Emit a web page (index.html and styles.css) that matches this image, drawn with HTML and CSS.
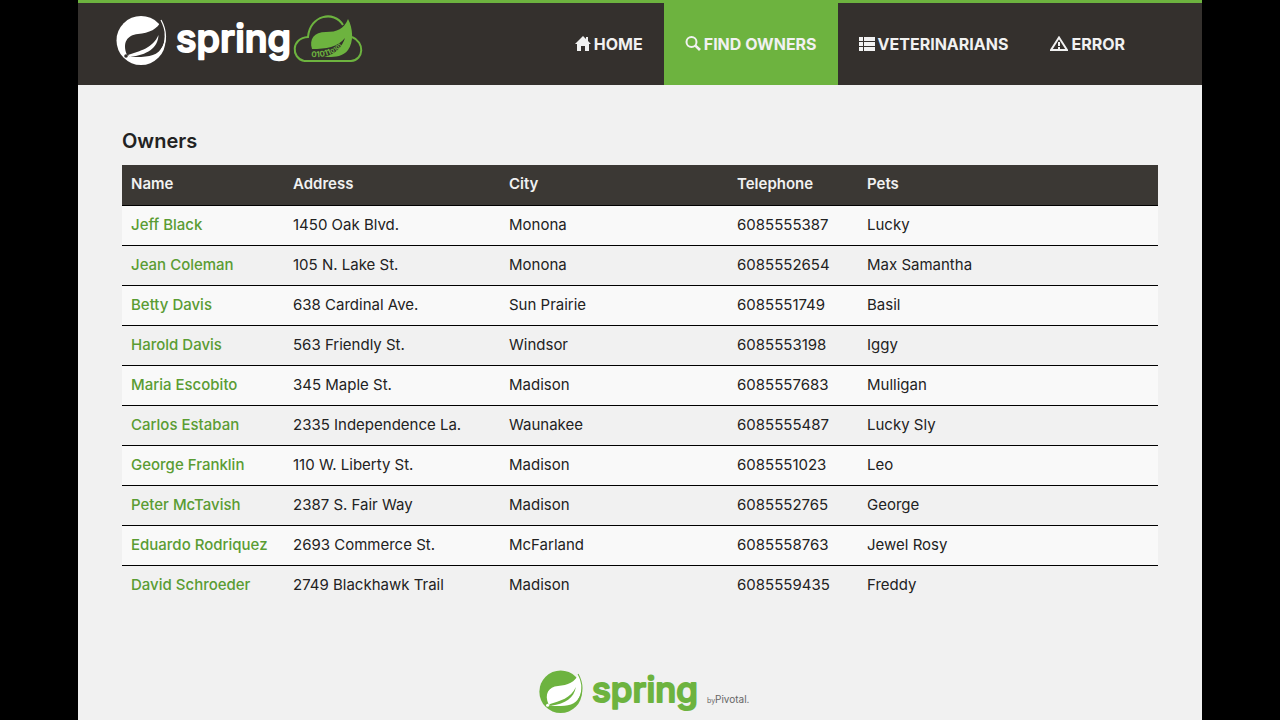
FILE: index.html
```
<!DOCTYPE html>
<html lang="en">
<head>
    <meta charset="UTF-8">
    <meta name="viewport" content="width=device-width, initial-scale=1.0">
    <title>PetClinic :: Owners</title>

    <link rel="stylesheet" href="styles.css">
</head>
<body>
    <div class="page">
        <header class="header">
            <a href="#" class="logo" aria-label="Spring">
                <svg width="248" height="56" viewBox="116 14 248 56">
                    <circle cx="141" cy="40.5" r="24.5" fill="#fff"/>
                    <path d="M127 55C122 43 127 35 138 34C149 33 158 29 161 21C166 31 166 42 161 49C155 57 146 57 131 57Z" fill="#34302d"/>
                    <path d="M161 20C167 31 167 43 161 50" fill="none" stroke="#fff" stroke-width="1.200"/>
                    <path d="M128 55C140 51 153 48 158.500 35C158 48 147 55 130 57Z" fill="#fff"/>
                    <circle cx="126" cy="56" r="1.800" fill="#34302d"/>
                    <text x="176" y="52" class="logo-text">spring</text>
                    <path d="M304 61C291 58 291 38 308 37C310 15 334 10 343 25M352 37C365 42 364 60 351 61H304" fill="none" stroke="#6db33f" stroke-width="2"/>
                    <path d="M312 49C309 39 314 32 326 32C337 32 344 29 348 19C353 28 354 42 348 50C342 58 331 57 324 57C336 54 342 47 345 38C338 47 326 49 312 49Z" fill="#6db33f"/>
                    <path id="bits" d="M311 57Q334 59 346 41" fill="none"/>
                    <text class="logo-bits"><textPath href="#bits">01011<tspan class="small-bits">0101</tspan></textPath></text>
                </svg>
            </a>
            <nav class="nav">
                <a href="#" class="nav-link">
                    <svg class="icon" viewBox="0 0 16 16"><path d="M8 0L0 8H2V15H6V10H10V15H14V8H16L13 5V1H11V3Z"/></svg>
                    HOME
                </a>
                <a href="#" class="nav-link active">
                    <svg class="icon" viewBox="0 0 16 16"><circle cx="6.500" cy="6" r="5" fill="none" stroke="currentColor" stroke-width="2"/><path d="M9 10L11 8.500L16 13L14 15Z"/></svg>
                    FIND OWNERS
                </a>
                <a href="#" class="nav-link">
                    <svg class="icon" viewBox="0 0 16 16"><path d="M0 1H4V5H0ZM5 1H16V5H5ZM0 6H4V10H0ZM5 6H16V10H5ZM0 11H4V15H0ZM5 11H16V15H5Z"/></svg>
                    VETERINARIANS
                </a>
                <a href="#" class="nav-link">
                    <svg class="icon icon-wide" viewBox="0 0 18 16"><path d="M9 1.500L17 14H1Z" fill="none" stroke="currentColor" stroke-width="2"/><path d="M8 6H10V10H8ZM8 11H10V13H8Z"/></svg>
                    ERROR
                </a>
            </nav>
        </header>

        <main class="content">
            <h2 class="title">Owners</h2>

            <table class="owners">
                <thead>
                    <tr>
                        <th class="col-name">Name</th>
                        <th class="col-address">Address</th>
                        <th class="col-city">City</th>
                        <th class="col-telephone">Telephone</th>
                        <th>Pets</th>
                    </tr>
                </thead>
                <tbody>
                    <tr><td><a href="#">Jeff Black</a></td><td>1450 Oak Blvd.</td><td>Monona</td><td>6085555387</td><td>Lucky</td></tr>
                    <tr><td><a href="#">Jean Coleman</a></td><td>105 N. Lake St.</td><td>Monona</td><td>6085552654</td><td>Max Samantha</td></tr>
                    <tr><td><a href="#">Betty Davis</a></td><td>638 Cardinal Ave.</td><td>Sun Prairie</td><td>6085551749</td><td>Basil</td></tr>
                    <tr><td><a href="#">Harold Davis</a></td><td>563 Friendly St.</td><td>Windsor</td><td>6085553198</td><td>Iggy</td></tr>
                    <tr><td><a href="#">Maria Escobito</a></td><td>345 Maple St.</td><td>Madison</td><td>6085557683</td><td>Mulligan</td></tr>
                    <tr><td><a href="#">Carlos Estaban</a></td><td>2335 Independence La.</td><td>Waunakee</td><td>6085555487</td><td>Lucky Sly</td></tr>
                    <tr><td><a href="#">George Franklin</a></td><td>110 W. Liberty St.</td><td>Madison</td><td>6085551023</td><td>Leo</td></tr>
                    <tr><td><a href="#">Peter McTavish</a></td><td>2387 S. Fair Way</td><td>Madison</td><td>6085552765</td><td>George</td></tr>
                    <tr><td><a href="#">Eduardo Rodriquez</a></td><td>2693 Commerce St.</td><td>McFarland</td><td>6085558763</td><td>Jewel Rosy</td></tr>
                    <tr><td><a href="#">David Schroeder</a></td><td>2749 Blackhawk Trail</td><td>Madison</td><td>6085559435</td><td>Freddy</td></tr>
                </tbody>
            </table>
        </main>

        <footer class="footer">
            <svg width="216" height="48" viewBox="538 669 216 48">
                <g transform="translate(438 656.500) scale(.87)">
                    <circle cx="141" cy="40.500" r="24.500" fill="#6db33f"/>
                    <path d="M127 55C122 43 127 35 138 34C149 33 158 29 161 21C166 31 166 42 161 49C155 57 146 57 131 57Z" fill="#fff"/>
                    <path d="M161 20C167 31 167 43 161 50" fill="none" stroke="#6db33f" stroke-width="1.200"/>
                    <path d="M128 55C140 51 153 48 158.500 35C156 48 147 54 130 56.500Z" fill="#6db33f"/>
                    <circle cx="126" cy="56" r="1.800" fill="#fff"/>
                </g>
                <text x="592" y="702" class="footer-text">spring</text>
                <text x="707" y="703" class="footer-by">by</text>
                <text x="715" y="703" class="footer-pivotal">Pivotal.</text>
            </svg>
        </footer>
    </div>
</body>
</html>
```
FILE: styles.css
```
* {
    box-sizing: border-box;
}

body {
    font-family: Inter, "Liberation Sans", sans-serif;
    font-size: 15px;
    line-height: 20px;
    color: #222;

    background-color: #000;

    margin: 0;
}

.page {
    background-color: #f1f1f1;

    display: flex;
    flex-direction: column;

    max-width: 1124px;
    min-height: 100vh;
    margin: 0 auto;
}

.header {
    background-color: #34302d;

    display: flex;
    justify-content: space-between;

    padding: 0 56px 0 38px;

    border-top: 3px solid #6db33f;
}

.logo {
    padding-top: 11px;
}

.logo svg,
.footer svg {
    display: block;
}

.logo-text,
.footer-text {
    font-size: 38px;
    font-weight: 500;

    fill: #fff;
    stroke: #fff;
    stroke-width: 2px;
    stroke-linejoin: round;
}

.logo-bits {
    font-size: 8px;
    font-weight: 700;

    fill: #6db33f;
}

.small-bits {
    font-size: 6px;
}

.nav {
    display: flex;
}

.nav-link {
    color: #f1f1f1;
    font-size: 16px;
    font-weight: 700;
    text-decoration: none;

    display: flex;
    align-items: center;
    gap: 3px;

    height: 82px;
    padding: 0 21px;
}

.nav-link:hover,
.nav-link.active {
    background-color: #6db33f;
}

.icon {
    width: 16px;
    height: 16px;

    fill: currentColor;
}

.icon-wide {
    width: 18px;
}

.content {
    flex: 1;

    padding: 44px 44px 0;
}

.title {
    font-size: 20px;
    font-weight: 600;
    line-height: 24px;

    margin: 0 0 12px;
}

.owners {
    width: 100%;

    border-collapse: separate;
    border-spacing: 0;
    table-layout: fixed;
}

.owners th,
.owners td {
    text-align: left;

    height: 40px;
    padding: 0 9px 2px;

    border-bottom: 1px solid #000;
}

.owners th {
    background-color: #3b3834;
    color: #f1f1f1;
    font-weight: 600;

    height: 41px;
}

.owners tbody tr:nth-child(odd) {
    background-color: #f9f9f9;
}

.owners tr:last-child td {
    border-bottom: none;
}

.owners thead tr:last-child th {
    border-bottom: 1px solid #000;
}

.owners a {
    color: #5a9c33;
    font-weight: 500;
    text-decoration: none;
}

.owners a:hover {
    text-decoration: underline;
}

.col-name {
    width: 162px;
}

.col-address {
    width: 216px;
}

.col-city {
    width: 228px;
}

.col-telephone {
    width: 130px;
}

.footer {
    display: flex;
    justify-content: center;

    padding: 24px 0 3px 12px;
}

.footer-text {
    font-size: 35px;

    fill: #6db33f;
    stroke: #6db33f;
}

.footer-by {
    font-size: 7px;

    fill: #666;
}

.footer-pivotal {
    font-size: 10px;

    fill: #666;
}
```
